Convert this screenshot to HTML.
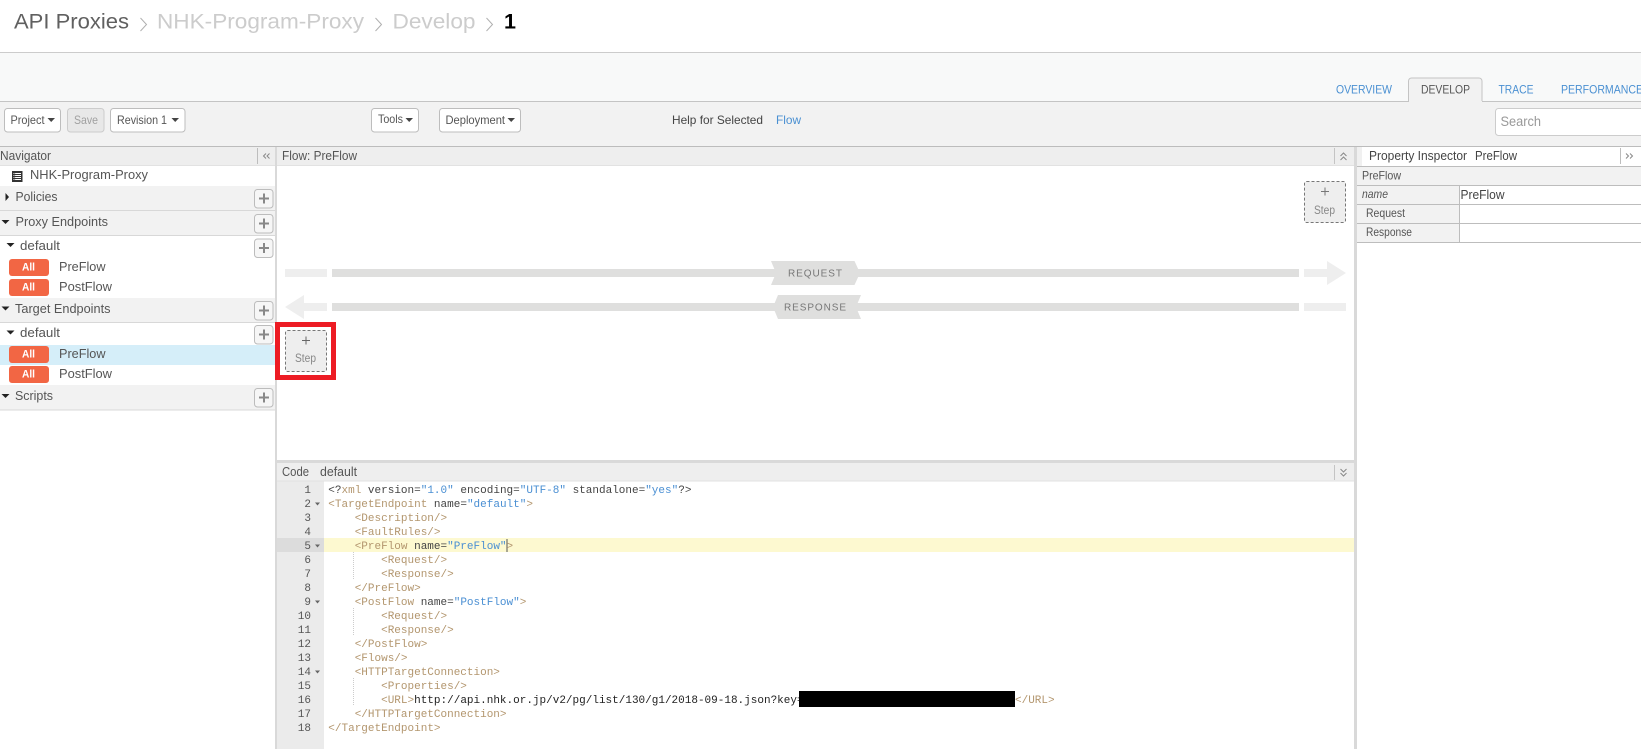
<!DOCTYPE html>
<html><head><meta charset="utf-8"><title>API Proxies</title>
<style>
html,body{margin:0;padding:0;background:#fff;overflow:hidden;width:1641px;height:749px}
svg{display:block;position:absolute;left:0;top:0}
text{font-family:"Liberation Sans",sans-serif;font-size:12px;fill:#555}
.m{font-family:"Liberation Mono",monospace;font-size:11px;fill:#444}
.t{fill:#b3966e}.s{fill:#4a8fd3}.k{fill:#222}
.n{font-family:"Liberation Mono",monospace;font-size:11px;fill:#555;text-anchor:end}
.b{fill:#fff;stroke:#bdbdbd;rx:3px}
.l{fill:#4a90d2}
.pl{stroke:#888;stroke-width:2;fill:none}
.pb{fill:#f6f6f6;stroke:#bcbcbc}
.c{stroke:#888;stroke-width:1;fill:none}
.h{stroke:#b0b0b0;stroke-width:1;fill:none}
</style></head><body>
<svg width="1641" height="749" viewBox="0 0 1641 749" xmlns="http://www.w3.org/2000/svg">
<rect width="1641" height="749" fill="#fff"/>
<!-- breadcrumb -->
<text x="14" y="28.500" style="font-size:21px;fill:#606060" textLength="115" lengthAdjust="spacingAndGlyphs">API Proxies</text>
<path d="M140.500 18L146.500 24.500L140.500 31" class="h"/>
<text x="157" y="28.500" style="font-size:21px;fill:#ccc" textLength="207" lengthAdjust="spacingAndGlyphs">NHK-Program-Proxy</text>
<path d="M375.500 18L381.500 24.500L375.500 31" class="h"/>
<text x="392.500" y="28.500" style="font-size:21px;fill:#ccc" textLength="83" lengthAdjust="spacingAndGlyphs">Develop</text>
<path d="M486.500 18L492.500 24.500L486.500 31" class="h"/>
<text x="504" y="28.500" style="font-size:21px;font-weight:bold;fill:#000" textLength="12" lengthAdjust="spacingAndGlyphs">1</text>
<rect y="52" width="1641" height="1" fill="#ccc"/>
<!-- tab strip -->
<rect y="53" width="1641" height="48" fill="#f8f9f9"/>
<rect y="101" width="1641" height="45" fill="#f2f2f2"/>
<rect y="101" width="1641" height="1" fill="#c4c4c4"/>
<path d="M1408.500 102V81a3 3 0 0 1 3-3H1479a3 3 0 0 1 3 3V102" fill="#f2f2f2" stroke="#c4c4c4"/>
<rect x="1409" y="101" width="73" height="2" fill="#f2f2f2"/>
<text x="1336" y="93.500" class="l" style="font-size:12px" textLength="56" lengthAdjust="spacingAndGlyphs">OVERVIEW</text>
<text x="1421" y="93.500" style="font-size:12px;fill:#555" textLength="49" lengthAdjust="spacingAndGlyphs">DEVELOP</text>
<text x="1498.500" y="93.500" class="l" style="font-size:12px" textLength="35" lengthAdjust="spacingAndGlyphs">TRACE</text>
<text x="1561" y="93.500" class="l" style="font-size:12px" textLength="82" lengthAdjust="spacingAndGlyphs">PERFORMANCE</text>
<!-- toolbar -->
<rect x="4.500" y="108.500" width="56" height="23.500" class="b"/>
<text x="10.500" y="124" style="font-size:12px" textLength="34" lengthAdjust="spacingAndGlyphs">Project</text>
<path d="M47.500 118H55L51.200 122z" fill="#444"/>
<rect x="67.500" y="108.500" width="36.500" height="23.500" fill="#e8e8e8" stroke="#ccc" rx="3"/>
<text x="74" y="124" style="font-size:12px;fill:#a0a0a0" textLength="24" lengthAdjust="spacingAndGlyphs">Save</text>
<rect x="110.500" y="108.500" width="74.500" height="23.500" class="b"/>
<text x="117" y="124" style="font-size:12px" textLength="50" lengthAdjust="spacingAndGlyphs">Revision 1</text>
<path d="M171.500 118H179L175.200 122z" fill="#444"/>
<rect x="371.500" y="108.500" width="47" height="23.500" class="b"/>
<text x="378" y="123" style="font-size:12px" textLength="25" lengthAdjust="spacingAndGlyphs">Tools</text>
<path d="M405.500 118H413L409.200 122z" fill="#444"/>
<rect x="439.500" y="108.500" width="81" height="23.500" class="b"/>
<text x="445.500" y="124" style="font-size:12px" textLength="59.500" lengthAdjust="spacingAndGlyphs">Deployment</text>
<path d="M507.500 118H515L511.200 122z" fill="#444"/>
<text x="672" y="124" style="font-size:12px;fill:#444" textLength="91" lengthAdjust="spacingAndGlyphs">Help for Selected</text>
<text x="776" y="124" class="l" style="font-size:12px" textLength="25" lengthAdjust="spacingAndGlyphs">Flow</text>
<rect x="1495.500" y="108.500" width="160" height="27" rx="3" fill="#fff" stroke="#ccc"/>
<text x="1500.500" y="126" style="font-size:14px;fill:#999" textLength="40.500" lengthAdjust="spacingAndGlyphs">Search</text>
<rect y="146" width="1641" height="1" fill="#bcbcbc"/>
<!-- panels base -->
<rect y="147" width="275" height="18.500" fill="#eee"/>
<rect x="277" y="147" width="1077" height="18.500" fill="#eee"/>
<rect y="165" width="275" height="1" fill="#e2e2e2"/>
<rect x="277" y="165" width="1077" height="1" fill="#e2e2e2"/>
<rect x="275" y="147" width="2" height="602" fill="#d9d9d9"/>
<rect x="1354" y="147" width="3" height="602" fill="#d9d9d9"/>
<rect x="1357" y="147" width="5" height="19" fill="#f0f0f0"/>
<rect x="1362" y="147" width="279" height="19" fill="#fff"/>
<!-- navigator -->
<text x="0" y="160" style="font-size:13px" textLength="51" lengthAdjust="spacingAndGlyphs">Navigator</text>
<rect x="257" y="148" width="1" height="16" fill="#bdbdbd"/>
<path d="M266 153.500l-2.500 2.500 2.500 2.500M269.500 153.500l-2.500 2.500 2.500 2.500" class="c"/>
<text x="282" y="160" style="font-size:13px" textLength="75" lengthAdjust="spacingAndGlyphs">Flow: PreFlow</text>
<rect x="12" y="171" width="10.500" height="11" fill="#333"/>
<path d="M13.500 173.500h7.500M13.500 175.500h7.500M13.500 177.500h7.500M13.500 179.500h7.500" stroke="#fff" stroke-width="1" stroke-dasharray="1 .6 6"/>
<text x="30" y="179" style="font-size:13px" textLength="118" lengthAdjust="spacingAndGlyphs">NHK-Program-Proxy</text>

<rect y="186" width="275" height="24" fill="#f2f2f2"/>
<rect y="210" width="275" height="1" fill="#d8d8d8"/>
<path d="M5.500 193v8l3.500-4z" fill="#222"/>
<text x="15.500" y="201" style="font-size:13px" textLength="42" lengthAdjust="spacingAndGlyphs">Policies</text>
<rect x="254.500" y="189.500" width="18.500" height="18.500" rx="3" class="pb"/>
<path d="M259 198.500h10M264 193.500v10" class="pl"/>

<rect y="211" width="275" height="24" fill="#f2f2f2"/>
<rect y="235" width="275" height="1" fill="#d8d8d8"/>
<path d="M1.500 220h8l-4 4z" fill="#222"/>
<text x="15.500" y="226" style="font-size:13px" textLength="92.500" lengthAdjust="spacingAndGlyphs">Proxy Endpoints</text>
<rect x="254.500" y="214.500" width="18.500" height="18.500" rx="3" class="pb"/>
<path d="M259 223.500h10M264 218.500v10" class="pl"/>

<path d="M6.500 243h8l-4 4z" fill="#222"/>
<text x="20" y="250" style="font-size:13px" textLength="40" lengthAdjust="spacingAndGlyphs">default</text>
<rect x="254.500" y="239" width="18.500" height="18.500" rx="3" class="pb"/>
<path d="M259 248h10M264 243v10" class="pl"/>

<rect x="9" y="259" width="40" height="17" rx="3" fill="#f26644"/>
<text x="22" y="270.500" style="font-size:11px;font-weight:bold;fill:#fff" textLength="13" lengthAdjust="spacingAndGlyphs">All</text>
<text x="59" y="271" style="font-size:13px" textLength="46.500" lengthAdjust="spacingAndGlyphs">PreFlow</text>
<rect x="9" y="279" width="40" height="17" rx="3" fill="#f26644"/>
<text x="22" y="290.500" style="font-size:11px;font-weight:bold;fill:#fff" textLength="13" lengthAdjust="spacingAndGlyphs">All</text>
<text x="59" y="291" style="font-size:13px" textLength="53" lengthAdjust="spacingAndGlyphs">PostFlow</text>

<rect y="298" width="275" height="24" fill="#f2f2f2"/>
<rect y="322" width="275" height="1" fill="#d8d8d8"/>
<path d="M1.500 306.500h8l-4 4z" fill="#222"/>
<text x="15" y="313" style="font-size:13px" textLength="95.500" lengthAdjust="spacingAndGlyphs">Target Endpoints</text>
<rect x="254.500" y="301.500" width="18.500" height="18.500" rx="3" class="pb"/>
<path d="M259 310.500h10M264 305.500v10" class="pl"/>

<path d="M6.500 330.500h8l-4 4z" fill="#222"/>
<text x="20" y="337" style="font-size:13px" textLength="40" lengthAdjust="spacingAndGlyphs">default</text>
<rect y="345" width="275" height="20" fill="#d5eef9"/>
<rect x="254.500" y="325.500" width="18.500" height="18.500" rx="3" class="pb"/>
<path d="M259 334.500h10M264 329.500v10" class="pl"/>

<rect x="9" y="346" width="40" height="17" rx="3" fill="#f26644"/>
<text x="22" y="357.500" style="font-size:11px;font-weight:bold;fill:#fff" textLength="13" lengthAdjust="spacingAndGlyphs">All</text>
<text x="59" y="358" style="font-size:13px" textLength="46.500" lengthAdjust="spacingAndGlyphs">PreFlow</text>
<rect x="9" y="366" width="40" height="17" rx="3" fill="#f26644"/>
<text x="22" y="377.500" style="font-size:11px;font-weight:bold;fill:#fff" textLength="13" lengthAdjust="spacingAndGlyphs">All</text>
<text x="59" y="378" style="font-size:13px" textLength="53" lengthAdjust="spacingAndGlyphs">PostFlow</text>

<rect y="385" width="275" height="24.500" fill="#f2f2f2"/>
<rect y="409.500" width="275" height="1" fill="#d8d8d8"/>
<path d="M1.500 394h8l-4 4z" fill="#222"/>
<text x="15" y="400" style="font-size:13px" textLength="38" lengthAdjust="spacingAndGlyphs">Scripts</text>
<rect x="254.500" y="388.500" width="18.500" height="18.500" rx="3" class="pb"/>
<path d="M259 397.500h10M264 392.500v10" class="pl"/>

<!-- flow panel -->
<rect x="1334" y="148" width="1" height="16" fill="#c4c4c4"/>
<path d="M1340.500 156l3-3 3 3M1340.500 160l3-3 3 3" class="c"/>
<rect x="1304.500" y="181.500" width="41" height="41" rx="2" fill="#eee" stroke="#777" stroke-dasharray="3 2"/>
<path d="M1321 191.500h8M1325 187.500v8" stroke="#777" stroke-width="1"/>
<text x="1314" y="214" style="font-size:12px;fill:#888" textLength="21" lengthAdjust="spacingAndGlyphs">Step</text>

<rect x="285" y="269" width="42" height="8" fill="#eeeeee"/>
<rect x="332" y="269" width="967" height="8" fill="#dfdfde"/>
<path d="M1304 269h23v-8l19 12-19 12v-8h-23z" fill="#eeeeee"/>
<path d="M771 261H854.500L860 273L854.500 285H771L776 273z" fill="#dfdfde"/>
<text x="788" y="276.500" style="font-size:10px;fill:#777" textLength="54" lengthAdjust="spacing">REQUEST</text>

<path d="M327 303H304v-8L285 307l19 12v-8h23z" fill="#eeeeee"/>
<rect x="332" y="303" width="967" height="8" fill="#dfdfde"/>
<rect x="1304" y="303" width="42" height="8" fill="#eeeeee"/>
<path d="M778 295H861L856 307L861 319H778L773 307z" fill="#dfdfde"/>
<text x="784" y="310.500" style="font-size:10px;fill:#777" textLength="62" lengthAdjust="spacing">RESPONSE</text>

<rect x="277.500" y="324.500" width="56" height="53" fill="#fff" stroke="#ed1c24" stroke-width="5"/>
<rect x="285.500" y="330.500" width="41" height="41" rx="2" fill="#eee" stroke="#777" stroke-dasharray="3 2"/>
<path d="M302 340.500h8M306 336.500v8" stroke="#666" stroke-width="1"/>
<text x="295" y="362" style="font-size:12px;fill:#888" textLength="21" lengthAdjust="spacingAndGlyphs">Step</text>

<!-- inspector -->
<text x="1369" y="160" style="font-size:13px;fill:#444" textLength="98" lengthAdjust="spacingAndGlyphs">Property Inspector</text>
<text x="1475" y="160" style="font-size:13px;fill:#444" textLength="42" lengthAdjust="spacingAndGlyphs">PreFlow</text>
<rect x="1620" y="148" width="1" height="16" fill="#bdbdbd"/>
<path d="M1626 153.500l2.500 2.500-2.500 2.500M1630 153.500l2.500 2.500-2.500 2.500" class="c"/>
<rect x="1357" y="166" width="284" height="1" fill="#bdbdbd"/>
<rect x="1357" y="167" width="284" height="18" fill="#f2f2f2"/>
<rect x="1357" y="185" width="284" height="1" fill="#bdbdbd"/>
<rect x="1357" y="186" width="102" height="18" fill="#f2f2f2"/>
<rect x="1357" y="204" width="284" height="1" fill="#bdbdbd"/>
<rect x="1357" y="205" width="102" height="18" fill="#f2f2f2"/>
<rect x="1357" y="223" width="284" height="1" fill="#bdbdbd"/>
<rect x="1357" y="224" width="102" height="18" fill="#f2f2f2"/>
<rect x="1357" y="242" width="284" height="1" fill="#bdbdbd"/>
<rect x="1459" y="185" width="1" height="58" fill="#bdbdbd"/>
<text x="1362" y="179.500" style="font-size:12px" textLength="39" lengthAdjust="spacingAndGlyphs">PreFlow</text>
<text x="1362" y="198" style="font-size:11.500px;font-style:italic" textLength="26" lengthAdjust="spacingAndGlyphs">name</text>
<text x="1460.500" y="199" style="font-size:13px;fill:#444" textLength="44" lengthAdjust="spacingAndGlyphs">PreFlow</text>
<text x="1366" y="217" style="font-size:12px" textLength="39" lengthAdjust="spacingAndGlyphs">Request</text>
<text x="1366" y="236" style="font-size:12px" textLength="46" lengthAdjust="spacingAndGlyphs">Response</text>

<!-- code -->
<rect x="275" y="460" width="1079" height="3" fill="#d9d9d9"/>
<rect x="277" y="463" width="1077" height="18" fill="#eee"/>
<rect x="277" y="480.500" width="1077" height="1" fill="#e2e2e2"/>
<text x="282" y="476" style="font-size:13px" textLength="27" lengthAdjust="spacingAndGlyphs">Code</text>
<text x="320" y="476" style="font-size:13px" textLength="37" lengthAdjust="spacingAndGlyphs">default</text>
<rect x="1334" y="465" width="1" height="15" fill="#c4c4c4"/>
<path d="M1340.500 469l3 3 3-3M1340.500 473l3 3 3-3" class="c"/>
<rect x="277" y="481.500" width="47" height="267.500" fill="#ebebeb"/>
<rect x="277" y="538" width="47" height="14" fill="#dcdcdc"/>
<rect x="324" y="538" width="1030" height="14" fill="#fdf9d0"/>
<path d="M353.500 552v28M353.500 608v28M353.500 678v28" stroke="#ccc" stroke-dasharray="1 1"/>
<rect x="506.500" y="539" width="1" height="13" fill="#555"/>
<g class="nums">
<text class="n" x="311" y="493">1</text>
<text class="n" x="311" y="507">2</text>
<text class="n" x="311" y="521">3</text>
<text class="n" x="311" y="535">4</text>
<text class="n" x="311" y="549">5</text>
<text class="n" x="311" y="563">6</text>
<text class="n" x="311" y="577">7</text>
<text class="n" x="311" y="591">8</text>
<text class="n" x="311" y="605">9</text>
<text class="n" x="311" y="619">10</text>
<text class="n" x="311" y="633">11</text>
<text class="n" x="311" y="647">12</text>
<text class="n" x="311" y="661">13</text>
<text class="n" x="311" y="675">14</text>
<text class="n" x="311" y="689">15</text>
<text class="n" x="311" y="703">16</text>
<text class="n" x="311" y="717">17</text>
<text class="n" x="311" y="731">18</text>
</g>
<path d="M315 502.500h5l-2.500 3zM315 544.500h5l-2.500 3zM315 600.500h5l-2.500 3zM315 670.500h5l-2.500 3z" fill="#666"/>
<g xml:space="preserve">
<text class="m" x="328.300" y="493">&lt;?<tspan class="t">xml</tspan> version=<tspan class="s">"1.0"</tspan> encoding=<tspan class="s">"UTF-8"</tspan> standalone=<tspan class="s">"yes"</tspan>?&gt;</text>
<text class="m" x="328.300" y="507"><tspan class="t">&lt;TargetEndpoint</tspan> name=<tspan class="s">"default"</tspan><tspan class="t">&gt;</tspan></text>
<text class="m t" x="354.700" y="521">&lt;Description/&gt;</text>
<text class="m t" x="354.700" y="535">&lt;FaultRules/&gt;</text>
<text class="m" x="354.700" y="549"><tspan class="t">&lt;PreFlow</tspan> name=<tspan class="s">"PreFlow"</tspan><tspan class="t">&gt;</tspan></text>
<text class="m t" x="381.100" y="563">&lt;Request/&gt;</text>
<text class="m t" x="381.100" y="577">&lt;Response/&gt;</text>
<text class="m t" x="354.700" y="591">&lt;/PreFlow&gt;</text>
<text class="m" x="354.700" y="605"><tspan class="t">&lt;PostFlow</tspan> name=<tspan class="s">"PostFlow"</tspan><tspan class="t">&gt;</tspan></text>
<text class="m t" x="381.100" y="619">&lt;Request/&gt;</text>
<text class="m t" x="381.100" y="633">&lt;Response/&gt;</text>
<text class="m t" x="354.700" y="647">&lt;/PostFlow&gt;</text>
<text class="m t" x="354.700" y="661">&lt;Flows/&gt;</text>
<text class="m t" x="354.700" y="675">&lt;HTTPTargetConnection&gt;</text>
<text class="m t" x="381.100" y="689">&lt;Properties/&gt;</text>
<text class="m" x="381.100" y="703"><tspan class="t">&lt;URL&gt;</tspan><tspan class="k">http://api.nhk.or.jp/v2/pg/list/130/g1/2018-09-18.json?key=</tspan></text>
<rect x="799" y="691" width="216" height="16" fill="#000"/>
<text class="m t" x="1015" y="703">&lt;/URL&gt;</text>
<text class="m t" x="354.700" y="717">&lt;/HTTPTargetConnection&gt;</text>
<text class="m t" x="328.300" y="731">&lt;/TargetEndpoint&gt;</text>
</g>
</svg>
</body></html>
